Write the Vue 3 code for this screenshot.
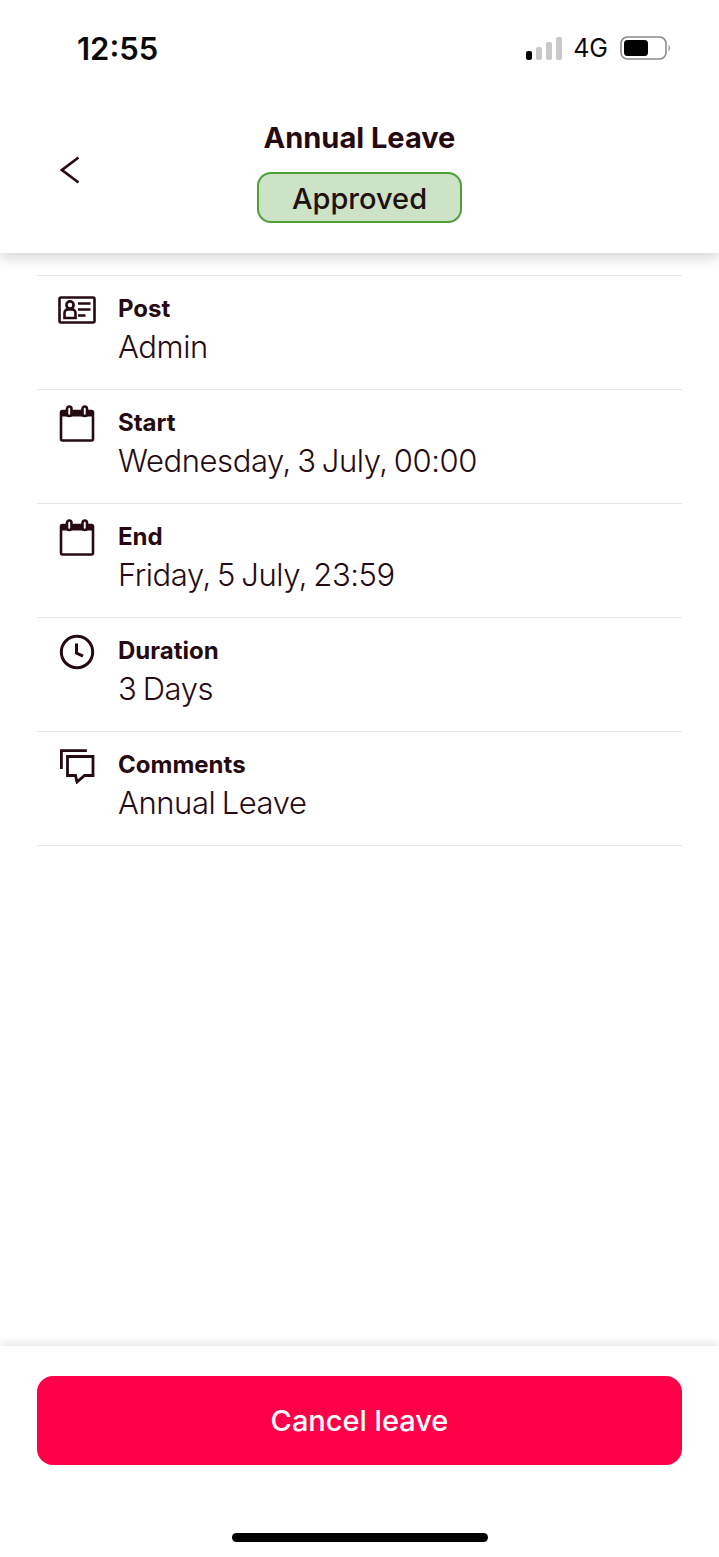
<script setup>
const rows = [
  { icon: 'post', label: 'Post', value: 'Admin' },
  { icon: 'cal', label: 'Start', value: 'Wednesday, 3 July, 00:00' },
  { icon: 'cal', label: 'End', value: 'Friday, 5 July, 23:59' },
  { icon: 'clock', label: 'Duration', value: '3 Days' },
  { icon: 'chat', label: 'Comments', value: 'Annual Leave' },
]
</script>

<template>
  <div class="page">
    <header class="header">
      <div class="status">
        <span class="time">12:55</span>
        <div class="status-right">
          <div class="signal">
            <i class="bar on b1"></i><i class="bar b2"></i><i class="bar b3"></i><i class="bar b4"></i>
          </div>
          <span class="net">4G</span>
          <svg class="battery" width="50" height="24" viewBox="0 0 50 24">
            <rect x="1" y="1" width="45" height="22" rx="6.5" fill="none" stroke="#8a8a8a" stroke-width="1.6"/>
            <rect x="4" y="4" width="24" height="16" rx="3.5" fill="#000"/>
            <path d="M48.5 9c1.2.6 1.5 1.7 1.5 3s-.3 2.4-1.5 3z" fill="#9a9a9a"/>
          </svg>
        </div>
      </div>
      <div class="title-bar">
        <svg class="back" width="20" height="28" viewBox="0 0 20 28">
          <path d="M18.5 1.5 L2 14 L18.5 26.5" fill="none" stroke="#260a12" stroke-width="2.7"/>
        </svg>
        <div class="title-col">
          <h1 class="title">Annual Leave</h1>
          <span class="badge">Approved</span>
        </div>
      </div>
    </header>

    <main class="list">
      <div v-for="r in rows" :key="r.label" class="row">
        <div class="icon">
          <svg v-if="r.icon === 'post'" width="38" height="28" viewBox="0 0 38 28" fill="none" stroke="#260a12" stroke-width="2.6">
            <rect x="1.5" y="1.5" width="35" height="25" rx="1.5"/>
            <circle cx="12" cy="9" r="3.6"/>
            <path d="M6.5 22v-5c0-2 1.5-3.6 3.6-3.6h3.8c2.1 0 3.6 1.6 3.6 3.6v5z"/>
            <path d="M20 7.5h12.5M20 13.5h12.5M20 19.5h7.5"/>
          </svg>
          <svg v-else-if="r.icon === 'cal'" width="36" height="37" viewBox="0 0 36 37" fill="none" stroke="#260a12" stroke-width="2.6">
            <rect x="2" y="6" width="32" height="29.5" rx="1.5"/>
            <path d="M2 5h32v6.5H2z" fill="#260a12" stroke="none"/>
            <rect x="8" y="1.5" width="4.5" height="9.5" rx="2.25" fill="#fff"/>
            <rect x="23.5" y="1.5" width="4.5" height="9.5" rx="2.25" fill="#fff"/>
          </svg>
          <svg v-else-if="r.icon === 'clock'" width="36" height="36" viewBox="0 0 36 36" fill="none" stroke="#260a12" stroke-width="3">
            <circle cx="18" cy="18" r="15.7"/>
            <path d="M17.5 9.5V19l6.5 3.2"/>
          </svg>
          <svg v-else width="36" height="36" viewBox="0 0 36 36" fill="none" stroke="#260a12" stroke-width="2.8">
            <path d="M2.4 21V2.6h25.5"/>
            <path d="M8.5 8.5h25.5v19H25.5L18 34l-1.5-6.5h-8z"/>
          </svg>
        </div>
        <div class="text">
          <div class="label">{{ r.label }}</div>
          <div class="value">{{ r.value }}</div>
        </div>
      </div>
    </main>

    <footer class="footer">
      <button class="cancel">Cancel leave</button>
      <div class="home"></div>
    </footer>
  </div>
</template>

<style>
body { background: #fff; }
</style>

<style scoped>
.page {
  width: 719px;
  height: 1557px;
  display: flex;
  flex-direction: column;
  overflow: hidden;
  background: #fff;
  font-family: Inter, "Noto Sans", sans-serif;
  color: #260a12;
}
.header {
  height: 253px;
  flex: none;
  box-sizing: border-box;
  background: #fff;
  box-shadow: 0 5px 12px rgba(0, 0, 0, 0.16);
  position: relative;
  z-index: 1;
}
.status {
  height: 96px;
  box-sizing: border-box;
  display: flex;
  align-items: center;
  justify-content: space-between;
  padding: 0 49px 0 77px;
}
.time {
  font-size: 31px;
  font-weight: 600;
  color: #0a0a0a;
}
.status-right {
  display: flex;
  align-items: center;
}
.signal {
  display: flex;
  align-items: flex-end;
  gap: 4px;
  height: 24px;
}
.bar {
  display: block;
  width: 6px;
  border-radius: 2px;
  background: #c9c9c9;
}
.bar.on { background: #000; }
.b1 { height: 9px; }
.b2 { height: 13px; }
.b3 { height: 18px; }
.b4 { height: 23px; }
.net {
  margin: 0 12px 0 11px;
  font-size: 25px;
  font-weight: 400;
  color: #0a0a0a;
}
.title-bar {
  position: relative;
  display: flex;
  justify-content: center;
}
.back {
  position: absolute;
  left: 60px;
  top: 60px;
}
.title-col {
  display: flex;
  flex-direction: column;
  align-items: center;
  margin-top: 26px;
}
.title {
  margin: 0;
  font-size: 29px;
  line-height: 32px;
  font-weight: 700;
}
.badge {
  margin-top: 18px;
  box-sizing: border-box;
  width: 205px;
  height: 51px;
  padding-top: 2px;
  display: flex;
  align-items: center;
  justify-content: center;
  background: #cce3c5;
  border: 2px solid #4f9e3c;
  border-radius: 14px;
  font-size: 29px;
  font-weight: 450;
  color: #20100f;
}
.list {
  flex: 1;
  padding: 22px 37px 0;
}
.row {
  height: 114px;
  box-sizing: border-box;
  display: flex;
  border-top: 1px solid #e8e6e6;
}
.row:last-child {
  height: 115px;
  border-bottom: 1px solid #e8e6e6;
}
.icon {
  width: 81px;
  flex: none;
  box-sizing: border-box;
  padding: 13px 22px 0 20px;
  height: 54px;
  display: flex;
  align-items: center;
  justify-content: center;
}
.text { padding-top: 18px; }
.label {
  font-size: 24px;
  line-height: 30px;
  font-weight: 650;
}
.value {
  margin-top: 3px;
  font-size: 31px;
  line-height: 40px;
  font-weight: 300;
  letter-spacing: -0.42px;
  word-spacing: -2px;
}
.footer {
  position: relative;
  flex: none;
  height: 211px;
  box-sizing: border-box;
  padding: 30px 37px 0;
  background: #fff;
  box-shadow: 0 -3px 9px rgba(0, 0, 0, 0.1);
}
.cancel {
  display: block;
  width: 100%;
  height: 89px;
  border: 0;
  border-radius: 16px;
  background: #ff0048;
  color: #fff;
  font-family: inherit;
  font-size: 29px;
  font-weight: 450;
}
.home {
  position: absolute;
  left: 232px;
  top: 187px;
  width: 256px;
  height: 9px;
  border-radius: 5px;
  background: #000;
}
</style>
